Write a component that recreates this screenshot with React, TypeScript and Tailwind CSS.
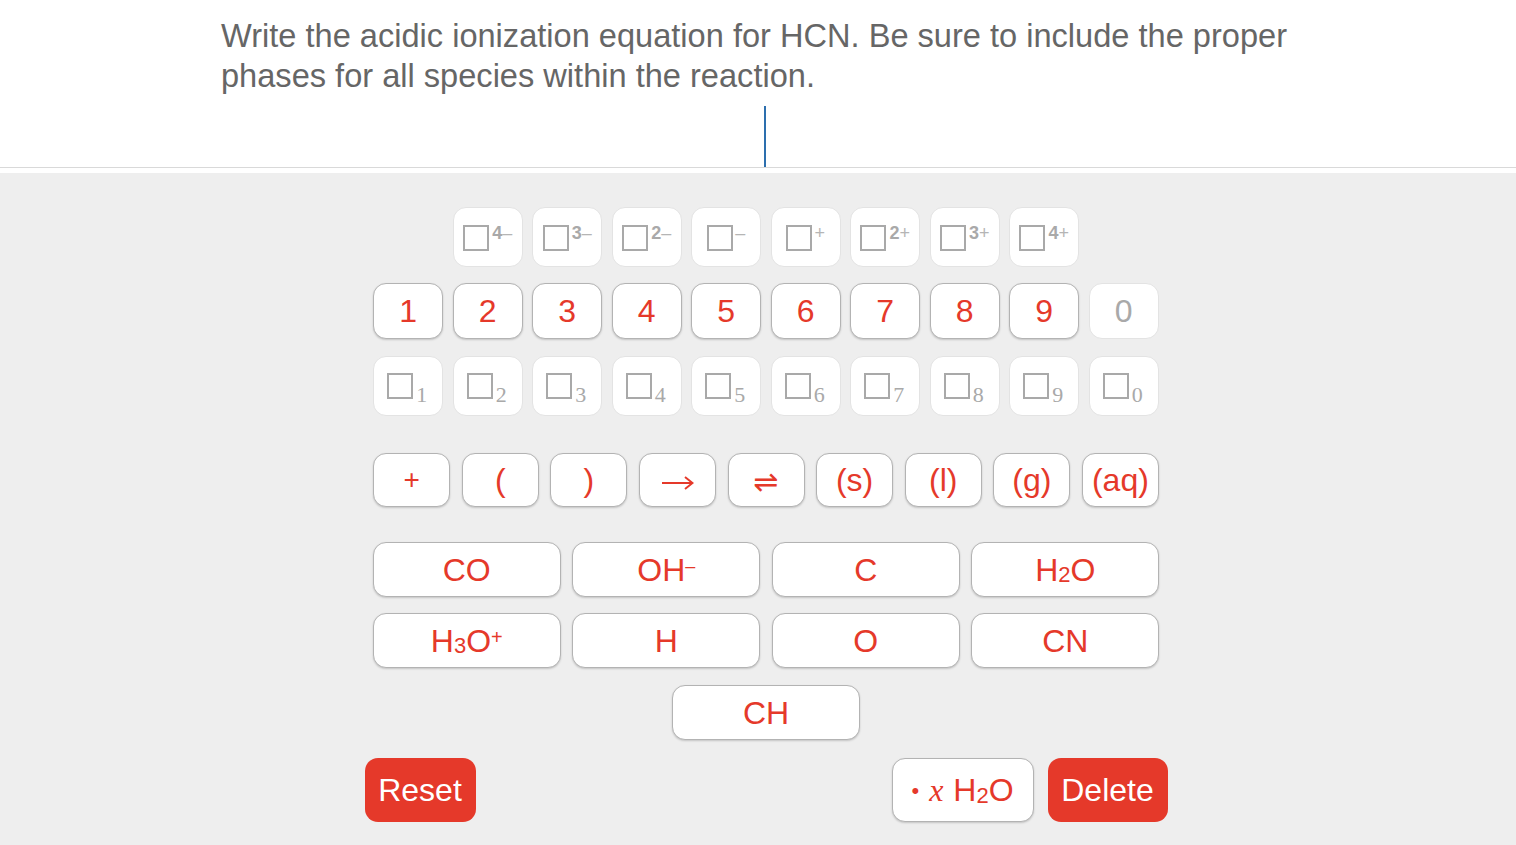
import React from "react";

const RED = "text-[#e5392a]";

const Box = () => (
  <span className="inline-block w-[26px] h-[26px] border-[2.5px] border-[#a9a9a9] shrink-0" />
);

const chargeKeys = [
  { n: "4", s: "–" },
  { n: "3", s: "–" },
  { n: "2", s: "–" },
  { n: "", s: "–" },
  { n: "", s: "+" },
  { n: "2", s: "+" },
  { n: "3", s: "+" },
  { n: "4", s: "+" },
];

const digits = ["1", "2", "3", "4", "5", "6", "7", "8", "9"];
const subs = ["1", "2", "3", "4", "5", "6", "7", "8", "9", "0"];
const symbols = ["+", "(", ")", "→", "⇌", "(s)", "(l)", "(g)", "(aq)"];

const activeBtn =
  "bg-white border border-[#b3b3b3] shadow-[0_1px_2px_rgba(0,0,0,0.18)] flex items-center justify-center";
const disabledBtn = "bg-white border border-[#e3e3e3] flex items-center justify-center";

const Species = ({ children }: { children: React.ReactNode }) => (
  <div className={`${activeBtn} w-[188px] h-[55px] rounded-[13px] text-[32px] leading-[40px] ${RED}`}>
    {children}
  </div>
);

const Arrow = () => (
  <svg width="33" height="16" viewBox="0 0 33 16" className="mt-[6px]">
    <line x1="1" y1="8" x2="31" y2="8" stroke="#e5392a" strokeWidth="2" />
    <path d="M24 2 L31.5 8 L24 14" fill="none" stroke="#e5392a" strokeWidth="2" />
  </svg>
);

export default function App() {
  return (
    <div className="w-[1516px] h-[845px] bg-[#eeeeee] font-['Liberation_Sans',Arial,sans-serif] overflow-hidden">
      {/* question + answer field */}
      <div className="bg-white border-b border-[#d9d9d9] h-[168px] pt-[16px]">
        <p className="ml-[221px] w-[1120px] text-[32.6px] leading-[40px] text-[#666666]">
          Write the acidic ionization equation for HCN. Be sure to include the proper phases for all
          species within the reaction.
        </p>
        <div className="flex justify-center pl-[14px] mt-[10px]">
          <span className="block w-[2px] h-[61px] bg-[#2d6fae]" />
        </div>
      </div>
      <div className="bg-white h-[5px]" />

      {/* keypad */}
      <div className="flex flex-col items-center pl-[16px]">
        {/* charges */}
        <div className="flex gap-[9.5px] mt-[34px]">
          {chargeKeys.map((k, i) => (
            <div key={i} className={`${disabledBtn} w-[70px] h-[60px] rounded-[13px]`}>
              <div className="flex items-start mt-[2px]">
                <Box />
                {k.n && (
                  <span className="ml-[3px] text-[18px] font-bold leading-[18px] mt-[-1px] text-[#a9a9a9]">
                    {k.n}
                  </span>
                )}
                <span
                  className={`text-[18px] leading-[18px] mt-[-1px] text-[#b5b5b5] ${k.n ? "" : "ml-[2px]"}`}
                >
                  {k.s}
                </span>
              </div>
            </div>
          ))}
        </div>

        {/* digits */}
        <div className="flex gap-[9.5px] mt-[16px]">
          {digits.map((d) => (
            <div key={d} className={`${activeBtn} w-[70px] h-[56px] rounded-[13px] text-[32px] ${RED}`}>
              {d}
            </div>
          ))}
          <div className={`${disabledBtn} w-[70px] h-[56px] rounded-[13px] text-[32px] text-[#a9a9a9]`}>
            0
          </div>
        </div>

        {/* subscripts */}
        <div className="flex gap-[9.5px] mt-[17px]">
          {subs.map((d) => (
            <div key={d} className={`${disabledBtn} w-[70px] h-[60px] rounded-[13px]`}>
              <div className="flex items-end pr-[2px]">
                <Box />
                <span className="ml-[3px] font-['Liberation_Serif',serif] text-[22px] leading-[18px] mb-[-5px] text-[#a9a9a9]">
                  {d}
                </span>
              </div>
            </div>
          ))}
        </div>

        {/* symbols */}
        <div className="flex gap-[11.6px] mt-[37px]">
          {symbols.map((s) => (
            <div
              key={s}
              className={`${activeBtn} w-[77px] h-[54px] rounded-[13px] ${RED} ${
                s === "+" ? "text-[28px]" : "text-[32px]"
              }`}
            >
              {s === "→" ? (
                <Arrow />
              ) : s === "⇌" ? (
                <span className="font-['DejaVu_Sans',sans-serif] text-[30px] leading-[40px] mt-[3px]">{s}</span>
              ) : (
                s
              )}
            </div>
          ))}
        </div>

        {/* species */}
        <div className="flex gap-[11.5px] mt-[35px]">
          <Species>CO</Species>
          <Species>
            OH<sup className="text-[18px] relative top-[-4px]">–</sup>
          </Species>
          <Species>C</Species>
          <Species>
            H<span className="text-[22px] mt-[10px]">2</span>O
          </Species>
        </div>
        <div className="flex gap-[11.5px] mt-[16px]">
          <Species>
            H<span className="text-[22px] mt-[10px]">3</span>O
            <sup className="text-[20px] relative top-[-4px]">+</sup>
          </Species>
          <Species>H</Species>
          <Species>O</Species>
          <Species>CN</Species>
        </div>
        <div className="flex mt-[17px]">
          <Species>CH</Species>
        </div>

        {/* bottom actions */}
        <div className="flex justify-between w-[803px] mt-[18px]">
          <div className="w-[111px] h-[64px] rounded-[13px] bg-[#e5392a] text-white text-[32px] flex items-center justify-center">
            Reset
          </div>
          <div className="flex gap-[14px]">
            <div className={`${activeBtn} w-[142px] h-[64px] rounded-[13px] text-[32px] ${RED}`}>
              <span className="text-[22px] mr-[10px]">•</span>
              <span className="font-['Liberation_Serif',serif] italic text-[32px] mr-[10px]">x</span>
              H<span className="text-[22px] mt-[10px]">2</span>O
            </div>
            <div className="w-[120px] h-[64px] rounded-[13px] bg-[#e5392a] text-white text-[32px] flex items-center justify-center">
              Delete
            </div>
          </div>
        </div>
      </div>
    </div>
  );
}
